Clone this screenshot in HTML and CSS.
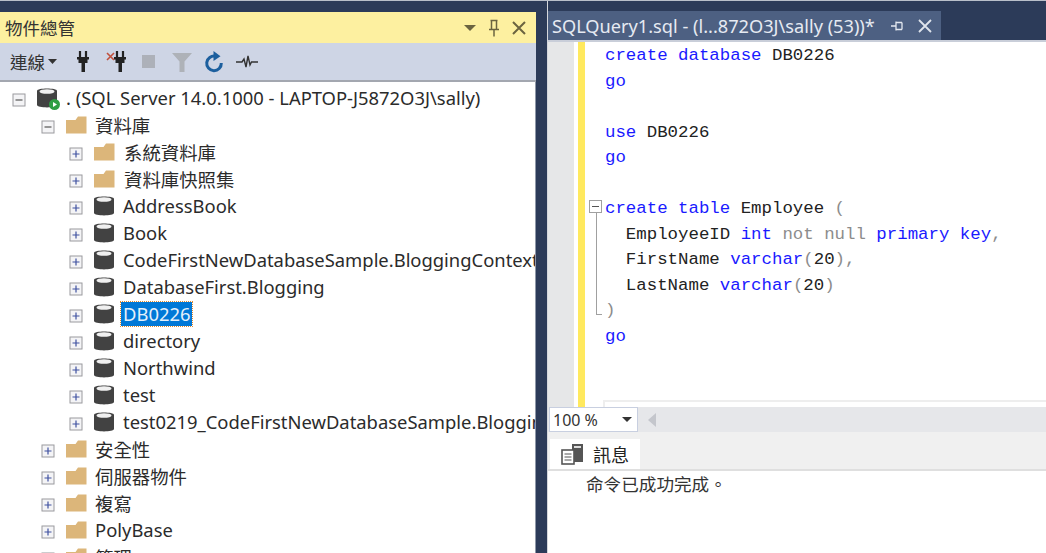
FILE: index.html
```html
<!DOCTYPE html>
<html lang="zh-Hant">
<head>
<meta charset="utf-8">
<title>SSMS</title>
<link rel="stylesheet" href="styles.css">
</head>
<body>
<svg class="defs" width="0" height="0" aria-hidden="true">
  <symbol id="plus" viewBox="0 0 14 14"><rect x="1" y="1" width="12" height="12" fill="#f4f4f6" stroke="#9a9a9e"/><path d="M3.5 7h7M7 3.5v7" stroke="#3f51a0" stroke-width="1.2"/></symbol>
  <symbol id="minus" viewBox="0 0 14 14"><rect x="1" y="1" width="12" height="12" fill="#f4f4f6" stroke="#9a9a9e"/><path d="M3.5 7h7" stroke="#555" stroke-width="1.2"/></symbol>
  <symbol id="folder" viewBox="0 0 21 18"><path d="M0 4h9.500L12 0.500h8.500V17.500H0z" fill="#dcb67a"/></symbol>
  <symbol id="db" viewBox="0 0 20 22"><path d="M0 4C0 .8 20 .8 20 4V18C20 21.200 0 21.200 0 18z" fill="#424242"/><ellipse cx="10" cy="4.500" rx="7.500" ry="2.300" fill="#f0f0f0"/></symbol>
  <symbol id="plug" viewBox="0 0 12 21"><path d="M3 0v6M9 0v6" stroke="#222" stroke-width="2.200"/><path d="M0 6h12v2.500h-1.500V12H8v9H4.500v-9H1.500V8.500H0z" fill="#222"/></symbol>
</svg>
<div class="app">
  <section class="explorer">
    <div class="explorer-top"></div>
    <header class="title-bar">
      <span class="title-text">物件總管</span>
      <span class="title-tools">
        <svg width="14" height="8" viewBox="0 0 14 8"><path d="M1 1h12L7 7z" fill="#6b6440"/></svg>
        <svg width="14" height="18" viewBox="0 0 14 18"><path d="M3.500 1.500h7M4.500 1.500v9M9.500 1.500v9M2 10.500h10M7 10.500v7" stroke="#6b6440" stroke-width="1.500" fill="none"/></svg>
        <svg width="16" height="16" viewBox="0 0 16 16"><path d="M2 2l12 12M14 2L2 14" stroke="#6b6440" stroke-width="2"/></svg>
      </span>
    </header>
    <div class="toolbar">
      <span class="connect">連線</span>
      <svg class="caret" width="9" height="5" viewBox="0 0 9 5"><path d="M0 0h9L4.500 5z" fill="#333"/></svg>
      <svg class="tool-plug" width="12" height="21"><use href="#plug"/></svg>
      <span class="tool-x-plug">
        <svg class="tool-x" width="9" height="9" viewBox="0 0 9 9"><path d="M1 1l7 7M8 1L1 8" stroke="#c0503c" stroke-width="1.600"/></svg>
        <svg width="12" height="21"><use href="#plug"/></svg>
      </span>
      <span class="tool-stop"></span>
      <svg class="tool-filter" width="20" height="20" viewBox="0 0 20 20"><path d="M0 1h20l-7.500 8.500V20h-5V9.500z" fill="#aeb2b8"/></svg>
      <svg class="tool-refresh" width="20" height="22" viewBox="0 0 20 22"><path d="M11.500 5.200A7.300 7.300 0 1 0 17.300 12" fill="none" stroke="#1c5f9e" stroke-width="3"/><path d="M9.500 0l7 5.300-7 4.700z" fill="#1c5f9e"/></svg>
      <svg class="tool-pulse" width="22" height="14" viewBox="0 0 22 14"><path d="M0 7h6l2-3 2 8 2-11 2 9 1.500-3H22" fill="none" stroke="#333" stroke-width="1.400"/></svg>
    </div>
    <ul class="tree">
      <li class="row"><svg class="exp" width="14" height="14"><use href="#minus"/></svg><span class="server-icon"><svg width="20" height="22"><use href="#db"/></svg><svg class="run-badge" width="11" height="11" viewBox="0 0 11 11"><circle cx="5.500" cy="5.500" r="5.500" fill="#2f9e44"/><path d="M4 3l4 2.500L4 8z" fill="#fff"/></svg></span><span class="label">. (SQL Server 14.0.1000 - LAPTOP-J5872O3J\sally)</span></li>
      <li class="row l1"><svg class="exp" width="14" height="14"><use href="#minus"/></svg><svg class="ico" width="21" height="18"><use href="#folder"/></svg><span class="label">資料庫</span></li>
      <li class="row l2"><svg class="exp" width="14" height="14"><use href="#plus"/></svg><svg class="ico" width="21" height="18"><use href="#folder"/></svg><span class="label">系統資料庫</span></li>
      <li class="row l2"><svg class="exp" width="14" height="14"><use href="#plus"/></svg><svg class="ico" width="21" height="18"><use href="#folder"/></svg><span class="label">資料庫快照集</span></li>
      <li class="row l2"><svg class="exp" width="14" height="14"><use href="#plus"/></svg><svg class="ico" width="20" height="22"><use href="#db"/></svg><span class="label">AddressBook</span></li>
      <li class="row l2"><svg class="exp" width="14" height="14"><use href="#plus"/></svg><svg class="ico" width="20" height="22"><use href="#db"/></svg><span class="label">Book</span></li>
      <li class="row l2"><svg class="exp" width="14" height="14"><use href="#plus"/></svg><svg class="ico" width="20" height="22"><use href="#db"/></svg><span class="label">CodeFirstNewDatabaseSample.BloggingContext</span></li>
      <li class="row l2"><svg class="exp" width="14" height="14"><use href="#plus"/></svg><svg class="ico" width="20" height="22"><use href="#db"/></svg><span class="label">DatabaseFirst.Blogging</span></li>
      <li class="row l2"><svg class="exp" width="14" height="14"><use href="#plus"/></svg><svg class="ico" width="20" height="22"><use href="#db"/></svg><span class="label selected">DB0226</span></li>
      <li class="row l2"><svg class="exp" width="14" height="14"><use href="#plus"/></svg><svg class="ico" width="20" height="22"><use href="#db"/></svg><span class="label">directory</span></li>
      <li class="row l2"><svg class="exp" width="14" height="14"><use href="#plus"/></svg><svg class="ico" width="20" height="22"><use href="#db"/></svg><span class="label">Northwind</span></li>
      <li class="row l2"><svg class="exp" width="14" height="14"><use href="#plus"/></svg><svg class="ico" width="20" height="22"><use href="#db"/></svg><span class="label">test</span></li>
      <li class="row l2"><svg class="exp" width="14" height="14"><use href="#plus"/></svg><svg class="ico" width="20" height="22"><use href="#db"/></svg><span class="label">test0219_CodeFirstNewDatabaseSample.Bloggin</span></li>
      <li class="row l1"><svg class="exp" width="14" height="14"><use href="#plus"/></svg><svg class="ico" width="21" height="18"><use href="#folder"/></svg><span class="label">安全性</span></li>
      <li class="row l1"><svg class="exp" width="14" height="14"><use href="#plus"/></svg><svg class="ico" width="21" height="18"><use href="#folder"/></svg><span class="label">伺服器物件</span></li>
      <li class="row l1"><svg class="exp" width="14" height="14"><use href="#plus"/></svg><svg class="ico" width="21" height="18"><use href="#folder"/></svg><span class="label">複寫</span></li>
      <li class="row l1"><svg class="exp" width="14" height="14"><use href="#plus"/></svg><svg class="ico" width="21" height="18"><use href="#folder"/></svg><span class="label">PolyBase</span></li>
      <li class="row l1"><svg class="exp" width="14" height="14"><use href="#plus"/></svg><svg class="ico" width="21" height="18"><use href="#folder"/></svg><span class="label">管理</span></li>
    </ul>
  </section>
  <section class="query">
    <div class="tab-strip">
      <div class="doc-tab">
        <span class="doc-title">SQLQuery1.sql - (l...872O3J\sally (53))*</span>
        <svg width="14" height="12" viewBox="0 0 14 12"><path d="M1 6h5M6 1.500v9M6 2.500h6M6 9.500h6M12 2.500v7" fill="none" stroke="#e4e8f0" stroke-width="1.300"/></svg>
        <svg width="14" height="14" viewBox="0 0 14 14"><path d="M1 1l12 12M13 1L1 13" stroke="#dfe4ec" stroke-width="1.800"/></svg>
      </div>
    </div>
    <div class="editor">
      <div class="gutter"></div>
      <div class="change-bar"></div>
      <div class="code-area">
        <pre class="code"><span class="fold-slot"></span><span class="k">create database</span> DB0226
<span class="fold-slot"></span><span class="k">go</span>

<span class="fold-slot"></span><span class="k">use</span> DB0226
<span class="fold-slot"></span><span class="k">go</span>

<span class="fold-slot"><svg class="fold-box" width="13" height="13" viewBox="0 0 13 13"><rect x=".5" y=".5" width="12" height="12" fill="#fff" stroke="#a0a0a0"/><path d="M3 6.500h7" stroke="#555"/></svg><span class="fold-line"></span></span><span class="k">create table</span> Employee <span class="g">(</span>
<span class="fold-slot"></span>  EmployeeID <span class="k">int</span> <span class="g">not null</span> <span class="k">primary key</span><span class="g">,</span>
<span class="fold-slot"></span>  FirstName <span class="k">varchar</span><span class="g">(</span>20<span class="g">),</span>
<span class="fold-slot"></span>  LastName <span class="k">varchar</span><span class="g">(</span>20<span class="g">)</span>
<span class="fold-slot"></span><span class="g">)</span>
<span class="fold-slot"></span><span class="k">go</span></pre>
        <div class="peek"></div>
      </div>
    </div>
    <div class="zoom-bar">
      <div class="zoom-combo"><span>100 %</span><svg width="10" height="5" viewBox="0 0 10 5"><path d="M0 0h10L5 5z" fill="#333"/></svg></div>
      <svg class="scroll-left" width="8" height="14" viewBox="0 0 8 14"><path d="M8 0v14L0 7z" fill="#c4c6cc"/></svg>
    </div>
    <div class="result-tabs">
      <div class="result-tab">
        <svg width="23" height="22" viewBox="0 0 23 22"><rect x="11" y="1" width="11" height="18" fill="#555"/><rect x="13" y="3" width="7" height="2" fill="#ddd"/><rect x="1" y="7" width="12" height="14" fill="#fff" stroke="#555" stroke-width="1.600"/><path d="M3.500 11h7M3.500 14h7M3.500 17h7" stroke="#555"/></svg>
        <span>訊息</span>
      </div>
    </div>
    <div class="messages">命令已成功完成。</div>
  </section>
</div>
</body>
</html>
```
FILE: styles.css
```css
* { box-sizing: border-box; }
html, body { margin: 0; padding: 0; height: 100%; overflow: hidden; }
body { background: #2c3b59; font-family: "Noto Sans", "Noto Sans CJK TC", sans-serif; color: #222; }
.defs { display: block; position: absolute; }
.app { display: flex; width: 1046px; height: 553px; border-top: 1px solid #b9bfca; }
.explorer { width: 536px; flex: none; display: flex; flex-direction: column; overflow: hidden; }
.explorer-top { height: 11px; flex: none; background: #2c3b59; }
.title-bar { height: 31px; flex: none; display: flex; align-items: center; justify-content: space-between; padding: 0 9px 0 5px; background: #fdf0a0; }
.title-text { font-size: 17.5px; color: #333; }
.title-tools { display: flex; align-items: center; gap: 10px; }
.toolbar { height: 39px; flex: none; display: flex; align-items: center; padding-left: 10px; background: #ced5e5; border-bottom: 2px solid #a3a7b0; }
.connect { font-size: 17.5px; color: #333; }
.caret { margin-left: 3px; }
.tool-plug { margin-left: 20px; }
.tool-x-plug { margin-left: 17px; display: flex; align-items: flex-start; }
.tool-x { margin-top: 1px; margin-right: -1px; }
.tool-stop { width: 13px; height: 13px; margin-left: 16px; background: #adb1b9; }
.tool-filter { margin-left: 17px; }
.tool-refresh { margin-left: 12px; }
.tool-pulse { margin-left: 12px; }
.tree { list-style: none; margin: 0; padding: 2px 0 0 12px; flex: 1; background: #fff; border-right: 1px solid #8f98a8; overflow: hidden; }
.row { height: 27px; display: flex; align-items: center; white-space: nowrap; font-size: 18.4px; }
.l1 { padding-left: 29px; }
.l2 { padding-left: 57px; }
.exp { flex: none; margin-top: 5px; }
.server-icon { position: relative; display: flex; margin-left: 11px; flex: none; }
.run-badge { position: absolute; right: -3px; bottom: -1px; }
.ico { flex: none; margin-left: 11px; }
.label { margin-left: 7px; padding: 0 2px; color: #2b2b2b; min-width: 0; overflow: hidden; }
.l1 .label { margin-left: 6px; }
.selected { background: #0078d7; color: #e4f0fb; outline: 1px dotted #e08a30; line-height: 24px; }
.query { flex: 1; min-width: 0; display: flex; flex-direction: column; margin-left: 11px; background: #fff; border-left: 1px solid #d5d7dc; }
.tab-strip { height: 41px; flex: none; padding-top: 10px; background: #2c3b59; border-bottom: 2px solid #c9ced9; }
.doc-tab { width: 393px; height: 29px; display: flex; align-items: center; padding-left: 4px; background: #4d6082; color: #e6eaf2; font-size: 18.2px; white-space: nowrap; }
.doc-title { width: 338px; }
.doc-tab svg + svg { margin-left: 14px; }
.editor { height: 365px; flex: none; display: flex; overflow: hidden; }
.gutter { width: 26px; flex: none; background: #e6e7e8; }
.change-bar { width: 7px; margin-left: 4px; flex: none; background: #ffe95e; }
.code-area { flex: 1; min-width: 0; position: relative; }
.code { margin: 0; padding-top: 1px; font-family: "Liberation Mono", monospace; font-size: 17.4px; line-height: 25.5px; color: #222; white-space: pre; }
.fold-slot { display: inline-block; width: 20px; position: relative; }
.fold-box { position: absolute; left: 4px; top: -13px; }
.fold-line { position: absolute; left: 11px; top: 0; width: 6px; height: 102px; border-left: 1px solid #a0a0a0; border-bottom: 1px solid #a0a0a0; }
.peek { position: absolute; left: 18px; right: 0; bottom: 0; height: 7px; border-top: 2px solid #eeeeee; border-left: 2px solid #eeeeee; }
.k { color: #1a1aff; }
.g { color: #8c8c8c; }
.zoom-bar { height: 25px; flex: none; display: flex; align-items: center; background: #e6e7ea; }
.zoom-combo { width: 89px; height: 25px; display: flex; align-items: center; justify-content: space-between; margin-left: 1px; padding: 0 5px 0 3px; background: #fff; border: 1px solid #c8cfe0; font-size: 16px; color: #333; }
.scroll-left { margin-left: 10px; }
.result-tabs { height: 39px; flex: none; padding: 7px 0 0 2px; background: #f0f0f0; border-bottom: 2px solid #dfdfdf; }
.result-tab { width: 90px; height: 30px; display: flex; align-items: center; gap: 9px; padding-left: 11px; background: #fff; font-size: 18px; color: #222; }
.messages { flex: 1; padding: 1px 0 0 38px; font-size: 17.6px; color: #333; line-height: 24px; }
```
